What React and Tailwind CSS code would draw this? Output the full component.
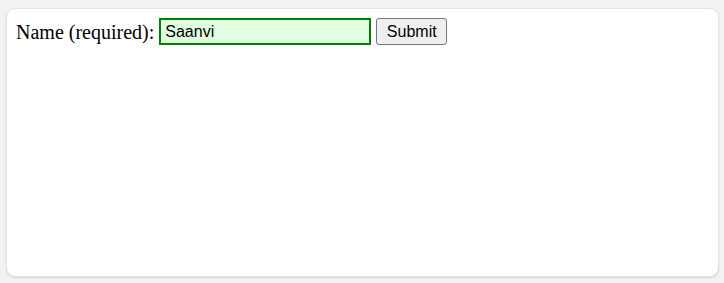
export default function App() {
  return (
    <div className="h-[283px] w-[724px] bg-[#f2f2f2] pl-[6px] pr-[5px] pt-[8px] pb-[6px]">
      <div className="h-full rounded-[9px] border border-[#e2e2e2] bg-white px-[9px] pt-[9px] shadow-[0_1px_2px_rgba(0,0,0,0.12)]">
        <form className="flex items-center" onSubmit={(e) => e.preventDefault()}>
          <label className="mr-[5px] font-['Liberation_Serif',serif] text-[20px] leading-none text-black">
            Name (required):
          </label>
          <input
            type="text"
            defaultValue="Saanvi"
            className="h-[27px] w-[212px] border-2 border-[#008000] bg-[#e0ffe0] px-[4px] font-['Liberation_Sans',Arial,sans-serif] text-[16px] text-black outline-none"
          />
          <button
            type="submit"
            className="ml-[5px] h-[27px] w-[71px] rounded-[3px] border border-[#767676] bg-[#efefef] font-['Liberation_Sans',Arial,sans-serif] text-[16px] text-black"
          >
            Submit
          </button>
        </form>
      </div>
    </div>
  )
}
